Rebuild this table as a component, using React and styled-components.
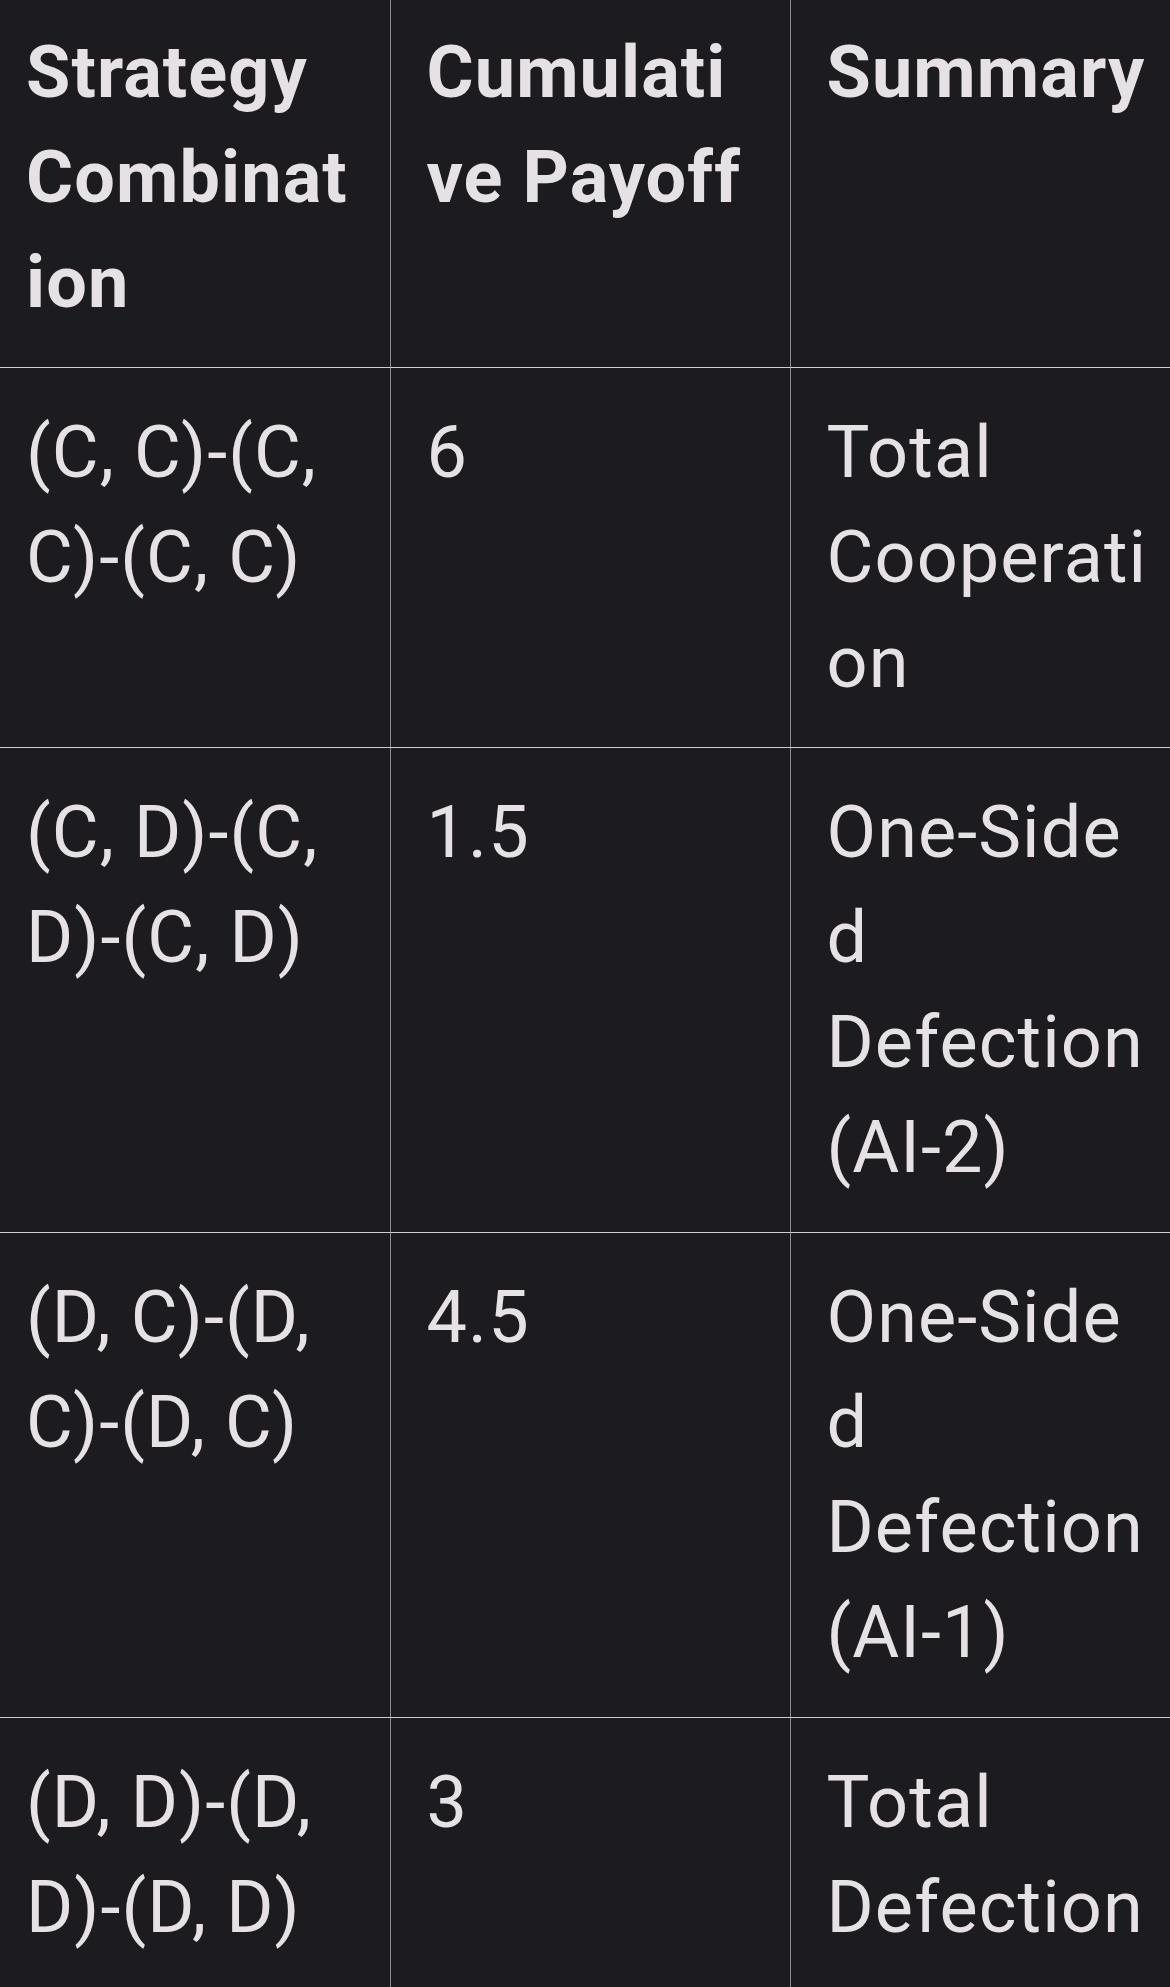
import styled, { createGlobalStyle } from "styled-components";

const rows = [
  { combo: "(C, C)-(C, C)-(C, C)", payoff: "6", summary: "Total Cooperation" },
  { combo: "(C, D)-(C, D)-(C, D)", payoff: "1.5", summary: "One-\u2060Sided Defection (AI-2)" },
  { combo: "(D, C)-(D, C)-(D, C)", payoff: "4.5", summary: "One-\u2060Sided Defection (AI-1)" },
  { combo: "(D, D)-(D, D)-(D, D)", payoff: "3", summary: "Total Defection" },
];

const GlobalStyle = createGlobalStyle`
  html, body {
    margin: 0;
    padding: 0;
    background: #1c1b20;
    overflow: hidden;
  }
  body {
    font-family: Roboto, "Noto Sans", sans-serif;
    color: #e6e1e5;
  }
`;

const Page = styled.div`
  width: 1170px;
  height: 1987px;
  overflow: hidden;
  background: #1c1b20;
`;

const Table = styled.table`
  margin: -12px 0 0 -10px;
  width: 1200px;
  table-layout: fixed;
  border-collapse: collapse;
`;

const HeadCell = styled.th`
  padding: 32px 36px;
  text-align: left;
  vertical-align: top;
  font-size: 72px;
  font-weight: 700;
  line-height: 105px;
  letter-spacing: 1.1px;
  overflow-wrap: anywhere;
  border-bottom: 1px solid #cfcbd2;
  border-left: ${(p) => (p.$first ? "none" : "1px solid #8f8b94")};
`;

const Cell = styled.td`
  padding: 32px 36px;
  vertical-align: top;
  font-size: 72px;
  font-weight: 400;
  line-height: 105px;
  letter-spacing: 1.1px;
  overflow-wrap: anywhere;
  border-bottom: 1px solid #cfcbd2;
  border-left: ${(p) => (p.$first ? "none" : "1px solid #8f8b94")};
`;

export default function App() {
  return (
    <Page>
      <GlobalStyle />
      <Table>
        <colgroup>
          <col style={{ width: 400 }} />
          <col style={{ width: 400 }} />
          <col style={{ width: 400 }} />
        </colgroup>
        <thead>
          <tr>
            <HeadCell $first>Strategy Combination</HeadCell>
            <HeadCell>Cumulative Payoff</HeadCell>
            <HeadCell>Summary</HeadCell>
          </tr>
        </thead>
        <tbody>
          {rows.map((r) => (
            <tr key={r.combo}>
              <Cell $first>{r.combo}</Cell>
              <Cell>{r.payoff}</Cell>
              <Cell>{r.summary}</Cell>
            </tr>
          ))}
        </tbody>
      </Table>
    </Page>
  );
}
